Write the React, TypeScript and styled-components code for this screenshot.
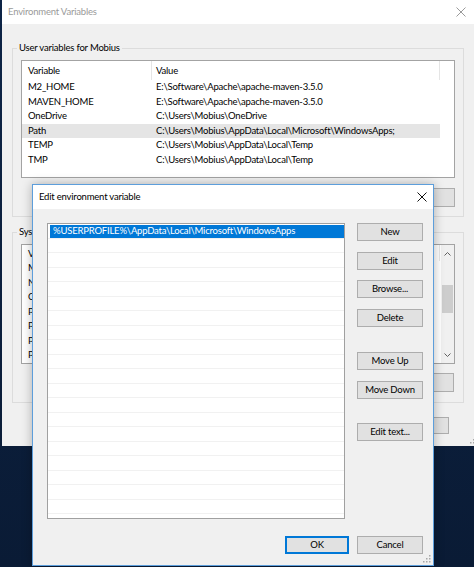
import React from "react";
import styled, { createGlobalStyle } from "styled-components";

const FONT = `Lato, "Segoe UI", "Noto Sans", sans-serif`;
const FS = "9.5px";
const LS = "-0.2px";

const Global = createGlobalStyle`
  html, body { margin: 0; padding: 0; background: #0c1f3b; }
  body { font-family: ${FONT}; font-size: ${FS}; letter-spacing: ${LS}; color: #000; }
  * { box-sizing: border-box; }
`;

const Desktop = styled.div`
  position: relative;
  width: 474px;
  height: 567px;
  overflow: hidden;
  background: linear-gradient(180deg, #0d2446 0%, #0a1b35 100%);
  font-family: ${FONT};
  font-size: ${FS};
  letter-spacing: ${LS};
`;

/* ---------- window chrome ---------- */

const Window = styled.section<{ $active?: boolean }>`
  position: absolute;
  display: flex;
  flex-direction: column;
  background: #f0f0f0;
  ${(p) =>
    p.$active
      ? `border: 1px solid #5d9edb; box-shadow: 0 0 10px rgba(0,0,0,0.28);`
      : ``}
`;

const BackWindow = styled(Window)`
  left: 2px;
  top: 0;
  width: 478px;
  height: 446px;
`;

const EditDialog = styled(Window)`
  left: 32px;
  top: 184px;
  width: 402px;
  height: 382px;
`;

const TitleBar = styled.header<{ $active?: boolean }>`
  flex: none;
  height: 24px;
  background: #fff;
  display: flex;
  align-items: center;
  padding-left: 6px;
  color: ${(p) => (p.$active ? "#000" : "#9a9a9a")};
  white-space: nowrap;
`;

const TitleText = styled.span`
  flex: 1;
  line-height: 12px;
`;

const CloseBox = styled.div<{ $w: number; $active?: boolean }>`
  flex: none;
  width: ${(p) => p.$w}px;
  height: 100%;
  display: flex;
  align-items: center;
  justify-content: center;
  color: ${(p) => (p.$active ? "#111" : "#9a9a9a")};
`;

const CloseIcon = () => (
  <svg width="10" height="10" viewBox="0 0 10 10">
    <path d="M0.5 0.5L9.5 9.5M9.5 0.5L0.5 9.5" stroke="currentColor" strokeWidth="1" fill="none" />
  </svg>
);

const Grip = styled.div`
  position: absolute;
  right: 2px;
  bottom: 2px;
  width: 8px;
  height: 8px;
  display: flex;
`;

const GripIcon = () => (
  <svg width="8" height="8" viewBox="0 0 8 8">
    {[
      [6, 0],
      [3, 3],
      [6, 3],
      [0, 6],
      [3, 6],
      [6, 6],
    ].map(([x, y], i) => (
      <rect key={i} x={x} y={y} width="1.5" height="1.5" fill="#a8a8a8" />
    ))}
  </svg>
);

/* ---------- buttons ---------- */

const Button = styled.button<{ $w?: number; $h?: number; $focus?: boolean }>`
  flex: none;
  width: ${(p) => p.$w ?? 66}px;
  height: ${(p) => p.$h ?? 18}px;
  margin: 0;
  padding: 0;
  font-family: ${FONT};
  font-size: ${FS};
  letter-spacing: ${LS};
  line-height: 12px;
  text-align: center;
  color: #000;
  background: #e1e1e1;
  border: 1px solid ${(p) => (p.$focus ? "#0078d7" : "#adadad")};
  box-shadow: ${(p) => (p.$focus ? "inset 0 0 0 1px #0078d7" : "none")};
`;

/* ---------- background window body ---------- */

const BackBody = styled.div`
  flex: 1;
  display: flex;
  flex-direction: column;
  padding: 24px 16px 0 10px;
`;

const Group = styled.div<{ $mt: number; $pb: number }>`
  flex: none;
  margin-top: ${(p) => p.$mt}px;
  border: 1px solid #dcdcdc;
  padding: 0 8px ${(p) => p.$pb}px 8px;
  display: flex;
  flex-direction: column;
`;

const GroupCaption = styled.div`
  align-self: flex-start;
  margin: -7px 0 6px -4px;
  padding: 0 2px;
  line-height: 12px;
  height: 12px;
  background: #f0f0f0;
  white-space: nowrap;
`;

const ListView = styled.div<{ $h: number }>`
  height: ${(p) => p.$h}px;
  flex: none;
  background: #fff;
  border: 1px solid #a3a3a3;
  display: flex;
  overflow: hidden;
`;

const ListMain = styled.div`
  flex: 1;
  min-width: 0;
  display: flex;
  flex-direction: column;
  overflow: hidden;
`;

const HeaderRow = styled.div<{ $h: number }>`
  flex: none;
  height: ${(p) => p.$h}px;
  display: flex;
`;

const HeaderCell = styled.div<{ $w: number; $pl: number }>`
  flex: none;
  width: ${(p) => p.$w}px;
  padding-left: ${(p) => p.$pl}px;
  border-right: 1px solid #e5e5e5;
  display: flex;
  align-items: center;
  white-space: nowrap;
`;

const DataRow = styled.div<{ $sel?: boolean }>`
  flex: none;
  height: 14.5px;
  width: 418px;
  display: flex;
  align-items: center;
  background: ${(p) => (p.$sel ? "#e5e5e5" : "transparent")};
  white-space: nowrap;
`;

const DataCell = styled.div<{ $w: number; $pl: number }>`
  flex: none;
  width: ${(p) => p.$w}px;
  padding-left: ${(p) => p.$pl}px;
  overflow: hidden;
  line-height: 12px;
`;

const ScrollBar = styled.div`
  flex: none;
  width: 13px;
  background: #f0f0f0;
  display: flex;
  flex-direction: column;
`;

const ScrollArrow = styled.div`
  flex: none;
  height: 17px;
  display: flex;
  align-items: center;
  justify-content: center;
  color: #606060;
`;

const ScrollTrack = styled.div`
  flex: 1;
  padding: 0 1px;
`;

const ScrollThumb = styled.div<{ $top: number; $h: number }>`
  margin-top: ${(p) => p.$top}px;
  height: ${(p) => p.$h}px;
  background: #cdcdcd;
`;

const Chevron = ({ up }: { up?: boolean }) => (
  <svg width="7" height="4" viewBox="0 0 7 4">
    <path
      d={up ? "M0.5 3.5L3.5 0.5L6.5 3.5" : "M0.5 0.5L3.5 3.5L6.5 0.5"}
      stroke="currentColor"
      strokeWidth="1"
      fill="none"
    />
  </svg>
);

const ButtonRow = styled.div<{ $mt: number; $pr?: number }>`
  flex: none;
  margin-top: ${(p) => p.$mt}px;
  padding-right: ${(p) => p.$pr ?? 0}px;
  display: flex;
  justify-content: flex-end;
  gap: 8px;
`;

/* ---------- edit dialog body ---------- */

const DialogBody = styled.div`
  flex: 1;
  display: flex;
  flex-direction: column;
  padding: 14px 10px 11px 14px;
`;

const DialogMain = styled.div`
  flex: none;
  height: 296px;
  display: flex;
  gap: 12px;
`;

const EntryList = styled.div`
  flex: 1;
  min-width: 0;
  background: #fff;
  border: 1px solid #a0a0a0;
  overflow: hidden;
  display: flex;
  flex-direction: column;
`;

const EntryRow = styled.div`
  flex: none;
  height: 14.5px;
  display: flex;
  padding: 1px 0 0 2px;
  border-bottom: 1px solid #f1f1f1;
`;

const EntryText = styled.div<{ $sel?: boolean }>`
  flex: 1;
  padding-left: 3px;
  line-height: 12.5px;
  white-space: nowrap;
  overflow: hidden;
  background: ${(p) => (p.$sel ? "#0078d7" : "transparent")};
  color: ${(p) => (p.$sel ? "#fff" : "#000")};
`;

const ActionColumn = styled.div`
  flex: none;
  width: 66px;
  display: flex;
  flex-direction: column;
`;

const ActionGroup = styled.div<{ $mt?: number }>`
  display: flex;
  flex-direction: column;
  gap: 10.67px;
  margin-top: ${(p) => p.$mt ?? 0}px;
`;

const DialogFooter = styled.div`
  flex: none;
  margin-top: 17px;
  display: flex;
  justify-content: flex-end;
  gap: 8px;
`;

/* ---------- data ---------- */

const userVars: [string, string][] = [
  ["M2_HOME", "E:\\Software\\Apache\\apache-maven-3.5.0"],
  ["MAVEN_HOME", "E:\\Software\\Apache\\apache-maven-3.5.0"],
  ["OneDrive", "C:\\Users\\Mobius\\OneDrive"],
  ["Path", "C:\\Users\\Mobius\\AppData\\Local\\Microsoft\\WindowsApps;"],
  ["TEMP", "C:\\Users\\Mobius\\AppData\\Local\\Temp"],
  ["TMP", "C:\\Users\\Mobius\\AppData\\Local\\Temp"],
];

const systemVars: [string, string][] = [
  ["MAVEN_HOME", "E:\\Software\\Apache\\apache-maven-3.5.0"],
  ["NUMBER_OF_PROCESSORS", "4"],
  ["OS", "Windows_NT"],
  ["Path", "C:\\ProgramData\\Oracle\\Java\\javapath;C:\\Windows\\system32"],
  ["PATHEXT", ".COM;.EXE;.BAT;.CMD;.VBS;.VBE;.JS;.JSE;.WSF;.WSH;.MSC"],
  ["PROCESSOR_ARCHITECTURE", "AMD64"],
  ["PROCESSOR_IDENTIFIER", "Intel64 Family 6 Model 60 Stepping 3"],
];

const entries = ["%USERPROFILE%\\AppData\\Local\\Microsoft\\WindowsApps"];
const EMPTY_ROWS = 20;

const COL1 = 130;
const COL2 = 288;
const BACK_BTN_W = 74;

function VarList({
  rows,
  height,
  headerH,
  selected,
  scroll,
}: {
  rows: [string, string][];
  height: number;
  headerH: number;
  selected?: number;
  scroll?: boolean;
}) {
  return (
    <ListView $h={height}>
      <ListMain>
        <HeaderRow $h={headerH}>
          <HeaderCell $w={COL1} $pl={6}>
            Variable
          </HeaderCell>
          <HeaderCell $w={COL2} $pl={4}>
            Value
          </HeaderCell>
        </HeaderRow>
        {rows.map(([k, v], i) => (
          <DataRow key={k + i} $sel={i === selected}>
            <DataCell $w={COL1} $pl={6}>
              {k}
            </DataCell>
            <DataCell $w={COL2} $pl={4}>
              {v}
            </DataCell>
          </DataRow>
        ))}
      </ListMain>
      {scroll && (
        <ScrollBar>
          <ScrollArrow>
            <Chevron up />
          </ScrollArrow>
          <ScrollTrack>
            <ScrollThumb $top={23} $h={28} />
          </ScrollTrack>
          <ScrollArrow>
            <Chevron />
          </ScrollArrow>
        </ScrollBar>
      )}
    </ListView>
  );
}

function GroupButtons({ mt, pr }: { mt: number; pr?: number }) {
  return (
    <ButtonRow $mt={mt} $pr={pr}>
      <Button $w={BACK_BTN_W} $h={19}>
        New...
      </Button>
      <Button $w={BACK_BTN_W} $h={19}>
        Edit...
      </Button>
      <Button $w={BACK_BTN_W} $h={19}>
        Delete
      </Button>
    </ButtonRow>
  );
}

export default function App() {
  return (
    <Desktop>
      <Global />
      <BackWindow>
        <TitleBar>
          <TitleText>Environment Variables</TitleText>
          <CloseBox $w={38}>
            <CloseIcon />
          </CloseBox>
        </TitleBar>
        <BackBody>
          <Group $mt={0} $pb={9}>
            <GroupCaption>User variables for Mobius</GroupCaption>
            <VarList rows={userVars} height={118} headerH={19} selected={3} />
            <GroupButtons mt={10} />
          </Group>
          <Group $mt={15} $pb={10}>
            <GroupCaption>System variables</GroupCaption>
            <VarList rows={systemVars} height={120} headerH={16} scroll />
            <GroupButtons mt={9} pr={1} />
          </Group>
          <ButtonRow $mt={14} $pr={15}>
            <Button $w={BACK_BTN_W} $h={17}>
              OK
            </Button>
            <Button $w={BACK_BTN_W} $h={17}>
              Cancel
            </Button>
          </ButtonRow>
        </BackBody>
        <Grip>
          <GripIcon />
        </Grip>
      </BackWindow>

      <EditDialog $active>
        <TitleBar $active>
          <TitleText>Edit environment variable</TitleText>
          <CloseBox $w={22} $active>
            <CloseIcon />
          </CloseBox>
        </TitleBar>
        <DialogBody>
          <DialogMain>
            <EntryList>
              {entries.map((e) => (
                <EntryRow key={e}>
                  <EntryText $sel>{e}</EntryText>
                </EntryRow>
              ))}
              {Array.from({ length: EMPTY_ROWS }, (_, i) => (
                <EntryRow key={"empty" + i}>
                  <EntryText />
                </EntryRow>
              ))}
            </EntryList>
            <ActionColumn>
              <ActionGroup>
                <Button>New</Button>
                <Button>Edit</Button>
                <Button>Browse...</Button>
                <Button>Delete</Button>
              </ActionGroup>
              <ActionGroup $mt={25}>
                <Button>Move Up</Button>
                <Button>Move Down</Button>
              </ActionGroup>
              <ActionGroup $mt={24.5}>
                <Button>Edit text...</Button>
              </ActionGroup>
            </ActionColumn>
          </DialogMain>
          <DialogFooter>
            <Button $w={64} $focus>
              OK
            </Button>
            <Button>Cancel</Button>
          </DialogFooter>
        </DialogBody>
        <Grip>
          <GripIcon />
        </Grip>
      </EditDialog>
    </Desktop>
  );
}
